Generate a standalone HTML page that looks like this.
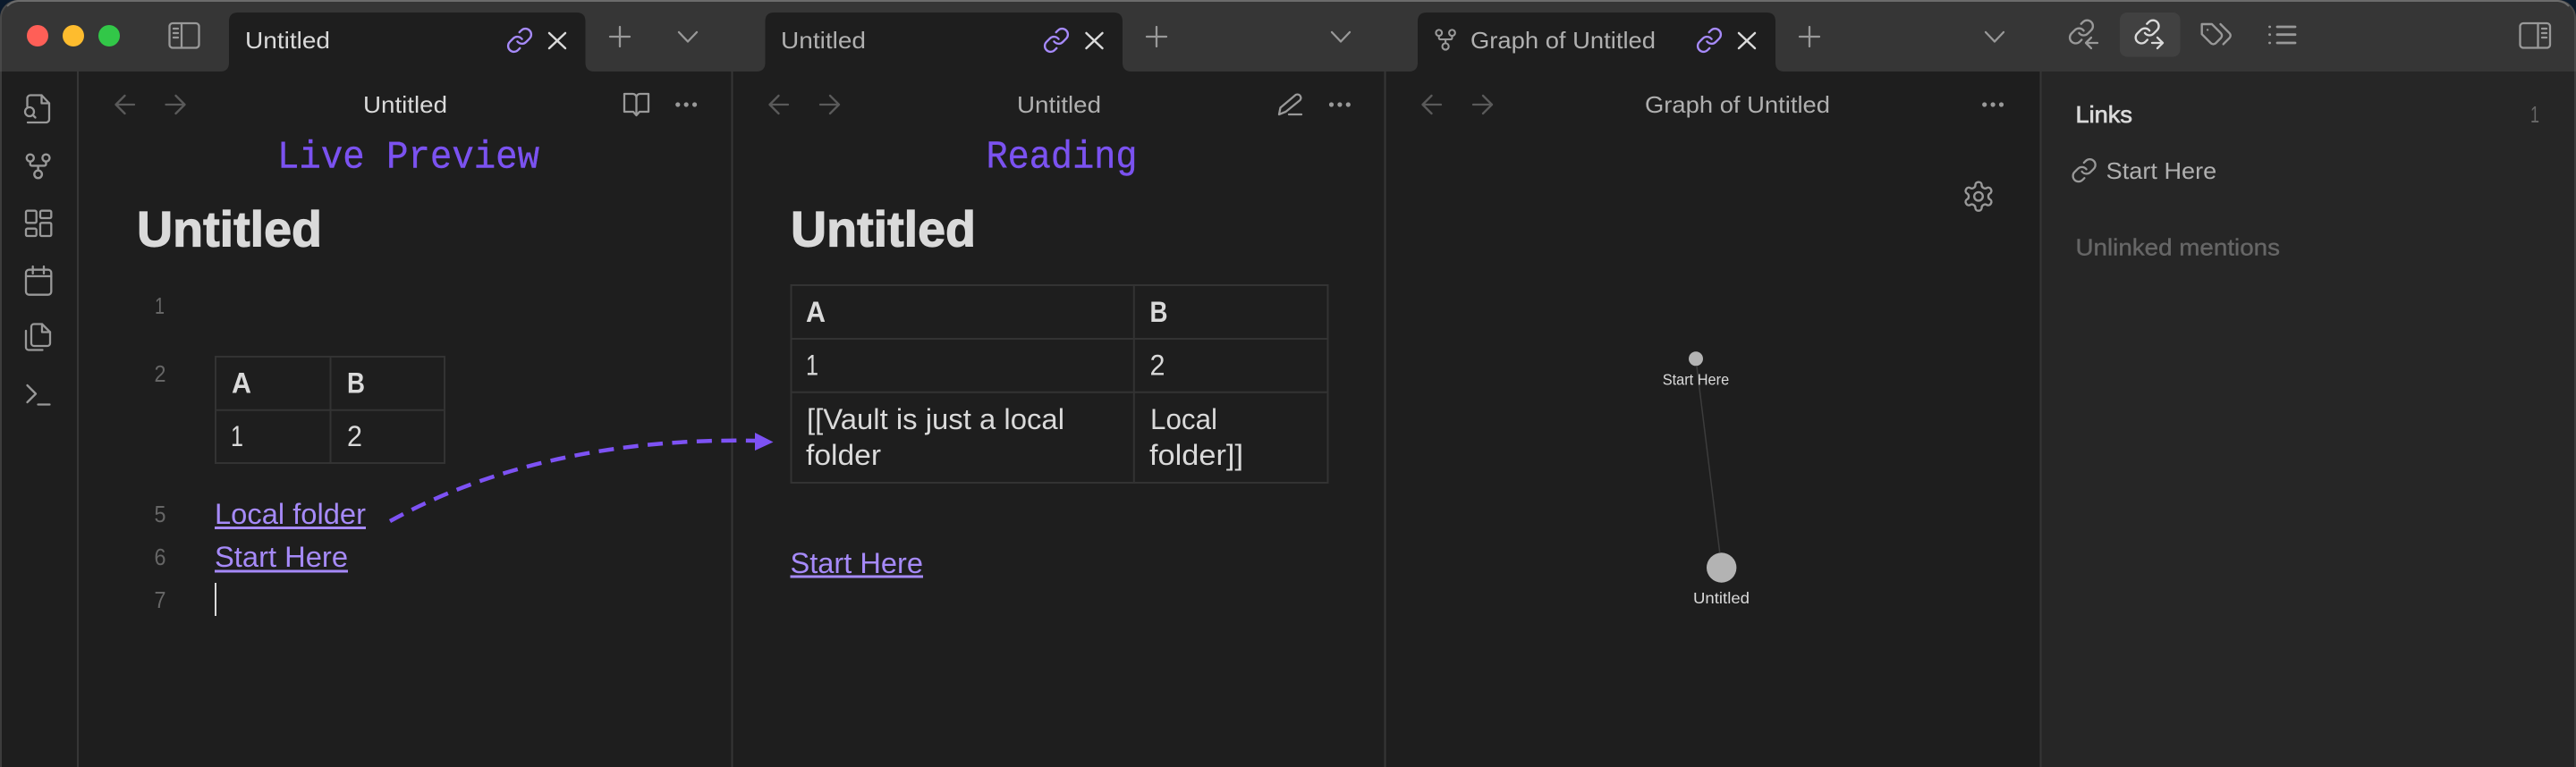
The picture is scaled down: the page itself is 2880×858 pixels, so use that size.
<!DOCTYPE html>
<html lang="en">
<head>
<meta charset="utf-8">
<title>Untitled - Obsidian</title>
<style>
html,body{margin:0;padding:0;width:2880px;height:858px;overflow:hidden;background:#0b1a2c}
svg{display:block;position:absolute;left:0;top:0}
text{font-family:"Liberation Sans",sans-serif;font-size:26px;fill:#dadada}
.mut{fill:#b0b0b0}
.num{fill:#666;font-size:26px}
.h1{font-size:56px;font-weight:700;stroke:#dadada;stroke-width:1.2}
.mono{font-family:"Liberation Mono",monospace;font-size:44px;fill:#7b52f0;stroke:#7b52f0;stroke-width:.4}
.cell{font-size:32px}
.b{font-weight:700}
.lnk{font-size:32px;fill:#a68af9}
.ic{fill:none;stroke:#999;stroke-width:2.300;stroke-linecap:round;stroke-linejoin:round}
.nav{fill:none;stroke:#5a5a5a;stroke-width:2.300;stroke-linecap:round;stroke-linejoin:round}
.cl{fill:none;stroke:#dadada;stroke-width:2.500;stroke-linecap:round}
.gl{font-size:17.500px}
.line{fill:#363636}
.tl{stroke:#a68af9;stroke-width:1.800}
</style>
</head>
<body>
<svg width="2880" height="858" viewBox="0 0 2880 858" xmlns="http://www.w3.org/2000/svg">
<defs>
<g id="link">
<path d="M10 13a5 5 0 0 0 7.540.540l3-3a5 5 0 0 0-7.070-7.070l-1.720 1.710"/>
<path d="M14 11a5 5 0 0 0-7.540-.540l-3 3a5 5 0 0 0 7.070 7.070l1.710-1.710"/>
</g>
<g id="fork">
<circle cx="5" cy="4.500" r="3.200"/>
<circle cx="19" cy="4.500" r="3.200"/>
<circle cx="12" cy="19" r="3.400"/>
<path d="M5 7.700V10a1.500 1.500 0 0 0 1.500 1.500h11A1.500 1.500 0 0 0 19 10V7.700M12 11.500v4"/>
</g>
<g id="dots">
<circle cx="0" cy="0" r="2.600"/><circle cx="9.400" cy="0" r="2.600"/><circle cx="18.800" cy="0" r="2.600"/>
</g>
</defs>

<!-- window -->
<path d="M0 858V20A20 20 0 0 1 20 0H2860A20 20 0 0 1 2880 20V858Z" fill="#1e1e1e"/>
<path d="M0 80V20A20 20 0 0 1 20 0H2860A20 20 0 0 1 2880 20V80Z" fill="#363636"/>
<rect x="2281" y="80" width="599" height="778" fill="#262626"/>
<path d="M1 80V20A19 19 0 0 1 20 1H2860A19 19 0 0 1 2879 20V80" fill="none" stroke="#484848" stroke-width="2"/>
<path d="M8 7A19 19 0 0 1 20 1H2860A19 19 0 0 1 2872 7" fill="none" stroke="#6c6c6c" stroke-width="2"/>
<rect x="0" y="80" width="2" height="778" fill="#3c3c3c"/>
<rect x="2878" y="80" width="2" height="778" fill="#3c3c3c"/>

<!-- tabs -->
<path d="M246 80Q256 80 256 70V24Q256 14 266 14H644.500Q654.500 14 654.500 24V70Q654.500 80 664.500 80Z" fill="#1e1e1e"/>
<path d="M845.500 80Q855.500 80 855.500 70V24Q855.500 14 865.500 14H1245Q1255 14 1255 24V70Q1255 80 1265 80Z" fill="#1e1e1e"/>
<path d="M1575 80Q1585 80 1585 70V24Q1585 14 1595 14H1975Q1985 14 1985 24V70Q1985 80 1995 80Z" fill="#1e1e1e"/>

<!-- pane borders -->
<rect class="line" x="86" y="80" width="2" height="778"/>
<rect class="line" x="817.500" y="80" width="2" height="778"/>
<rect class="line" x="1547.500" y="80" width="2" height="778"/>
<rect class="line" x="2280.500" y="80" width="2" height="778"/>

<!-- traffic lights -->
<circle cx="42" cy="40" r="12" fill="#ff5f57"/>
<circle cx="82" cy="40" r="12" fill="#febc2e"/>
<circle cx="122" cy="40" r="12" fill="#32c748"/>

<!-- left sidebar toggle -->
<g class="ic">
<rect x="189.500" y="26" width="33" height="27.500" rx="3.500"/>
<path d="M203 26V53.500M194 32H199M194 37H199M194 42H199"/>
</g>

<!-- tab 1 -->
<text x="274" y="54" textLength="95" lengthAdjust="spacingAndGlyphs">Untitled</text>
<use href="#link" class="ic tl" transform="translate(565.400 29.400) scale(1.300)" style="stroke:#a68af9;stroke-width:1.800"/>
<path class="cl" d="M614 37L632 54M632 37L614 54"/>
<path class="ic" d="M693 30V52M682 41H704"/>
<path class="ic" d="M759 36L769 46.500L779 36"/>

<!-- tab 2 -->
<text class="mut" x="873" y="54" textLength="95" lengthAdjust="spacingAndGlyphs">Untitled</text>
<use href="#link" class="ic" transform="translate(1165.400 29.400) scale(1.300)" style="stroke:#a68af9;stroke-width:1.800"/>
<path class="cl" d="M1214.500 37L1232.500 54M1232.500 37L1214.500 54"/>
<path class="ic" d="M1293 30V52M1282 41H1304"/>
<path class="ic" d="M1489 36L1499 46.500L1509 36"/>

<!-- tab 3 -->
<use href="#fork" class="ic" transform="translate(1603.500 32) scale(1.050)" style="stroke-width:2"/>
<text class="mut" x="1644" y="54" textLength="207" lengthAdjust="spacingAndGlyphs">Graph of Untitled</text>
<use href="#link" class="ic" transform="translate(1895.400 29.400) scale(1.300)" style="stroke:#a68af9;stroke-width:1.800"/>
<path class="cl" d="M1944 37L1962 54M1962 37L1944 54"/>
<path class="ic" d="M2023 30V52M2012 41H2034"/>
<path class="ic" d="M2220 36L2230 46.500L2240 36"/>

<!-- right toolbar -->
<rect x="2370" y="14" width="67.500" height="49.500" rx="8" fill="#414141"/>
<use href="#link" class="ic" transform="translate(2311.400 20) scale(1.300)" style="stroke-width:1.800"/>
<path class="ic" d="M2345 48H2332M2338 42L2332 48L2338 54"/>
<use href="#link" class="ic" transform="translate(2385 20) scale(1.300)" style="stroke:#dadada;stroke-width:1.800"/>
<path class="ic" style="stroke:#dadada" d="M2406 48H2418M2412 42L2418 48L2412 54"/>
<g transform="translate(2458.500 19) scale(1.600)" fill="none" stroke="#999" stroke-width="1.500" stroke-linecap="round" stroke-linejoin="round">
<path d="M9 5H2v7l6.290 6.290c.940.940 2.480.940 3.420 0l3.580-3.580c.940-.940.940-2.480 0-3.420L9 5Z"/>
<path d="M6 9.010V9"/>
<path d="M15 5l6.300 6.300a2.400 2.400 0 0 1 0 3.400L17 19"/>
</g>
<g class="ic" style="stroke-width:2.800">
<path d="M2546 30H2566M2546 38.700H2566M2546 48H2566"/>
<path d="M2537.500 30H2537.600M2537.500 38.700H2537.600M2537.500 48H2537.600"/>
</g>
<g class="ic">
<rect x="2817.500" y="26" width="33.500" height="27.500" rx="3.500"/>
<path d="M2837.500 26V53.500M2842 32H2847M2842 37H2847M2842 42H2847"/>
</g>

<!-- ribbon -->
<g class="ic">
<path d="M30.500 119V110a3.500 3.500 0 0 1 3.500-3.500H46.500L55 115.500V133.500a3.500 3.500 0 0 1-3.500 3.500H31"/>
<path d="M46.500 106.500V115.500H55"/>
<circle cx="33" cy="125" r="5"/><path d="M37 129L39.500 131.500"/>
<use href="#fork" transform="translate(27.500 171) scale(1.260)" style="stroke-width:1.900"/>
<rect x="29" y="235.700" width="11.700" height="13.600" rx="1.500"/>
<rect x="45" y="235.700" width="12.300" height="8.300" rx="1.500"/>
<rect x="29" y="255.700" width="11.700" height="8.300" rx="1.500"/>
<rect x="45" y="249.300" width="12.300" height="14.700" rx="1.500"/>
<rect x="29" y="301.700" width="28.300" height="28" rx="3.500"/>
<path d="M29 309H57.300M36.700 298V306M49 298V306"/>
<path d="M35 367V384a3 3 0 0 0 3 3H53a3 3 0 0 0 3-3V371.500L47 362.500H38A3 3 0 0 0 35 365.500Z"/>
<path d="M47 362.500V371.500H56"/>
<path d="M29 370V388.500a3 3 0 0 0 3 3H47.500"/>
<path d="M30.500 431L40 440.500L30.500 450M42.500 452.500H55.500"/>
</g>

<!-- pane 1 header -->
<path class="nav" d="M150 117H129.500M139.500 107L129.500 117L139.500 127"/>
<path class="nav" d="M185.500 117H206.500M196.500 107L206.500 117L196.500 127"/>
<text x="406" y="126" textLength="94" lengthAdjust="spacingAndGlyphs">Untitled</text>
<path class="ic" d="M711.500 109a4 4 0 0 0-4-4H698V125H708L711.500 129L715 125H725V105H715.500a4 4 0 0 0-4 4V126"/>
<use href="#dots" transform="translate(757.800 117)" fill="#999"/>

<text class="mono" x="310" y="187.500" textLength="293" lengthAdjust="spacingAndGlyphs">Live Preview</text>
<text class="h1" x="153" y="275.500" textLength="207" lengthAdjust="spacingAndGlyphs">Untitled</text>

<text class="num" x="173" y="351" textLength="11" lengthAdjust="spacingAndGlyphs">1</text>
<text class="num" x="172.500" y="427" textLength="13" lengthAdjust="spacingAndGlyphs">2</text>
<text class="num" x="172.500" y="584" textLength="13" lengthAdjust="spacingAndGlyphs">5</text>
<text class="num" x="172.500" y="632" textLength="13" lengthAdjust="spacingAndGlyphs">6</text>
<text class="num" x="172.500" y="680" textLength="13" lengthAdjust="spacingAndGlyphs">7</text>

<!-- table 1 -->
<g fill="none" stroke="#333" stroke-width="2">
<rect x="241" y="399" width="256" height="119"/>
<path d="M369.500 399V518M241 458.700H497"/>
</g>
<text class="cell b" x="259" y="439.500" textLength="22" lengthAdjust="spacingAndGlyphs">A</text>
<text class="cell b" x="388" y="439.500" textLength="20" lengthAdjust="spacingAndGlyphs">B</text>
<text class="cell" x="258" y="499" textLength="14" lengthAdjust="spacingAndGlyphs">1</text>
<text class="cell" x="388" y="499" textLength="17" lengthAdjust="spacingAndGlyphs">2</text>

<text class="lnk" x="240" y="586" textLength="169" lengthAdjust="spacingAndGlyphs">Local folder</text>
<rect x="240" y="589" width="169" height="3" fill="#a68af9"/>
<text class="lnk" x="240" y="634" textLength="149" lengthAdjust="spacingAndGlyphs">Start Here</text>
<rect x="240" y="637.500" width="149" height="3" fill="#a68af9"/>
<rect x="240" y="652" width="2" height="37" fill="#dadada"/>

<!-- arrow -->
<path d="M436 583C550 520 690 490 845 493" fill="none" stroke="#7d52f4" stroke-width="4.500" stroke-dasharray="17 10.500"/>
<path d="M844 484L864.500 494.500L844 504Z" fill="#7d52f4"/>

<!-- pane 2 header -->
<path class="nav" d="M881 117H860.500M870.500 107L860.500 117L870.500 127"/>
<path class="nav" d="M917 117H938M928 107L938 117L928 127"/>
<text class="mut" x="1137" y="126" textLength="94" lengthAdjust="spacingAndGlyphs">Untitled</text>
<path class="ic" d="M1447.500 107a3.700 3.700 0 0 1 6 5L1437.500 125L1430 128L1431.500 120.500ZM1441 128H1455"/>
<use href="#dots" transform="translate(1488.500 117)" fill="#999"/>

<text class="mono" x="1102.500" y="187.500" textLength="169" lengthAdjust="spacingAndGlyphs">Reading</text>
<text class="h1" x="884" y="275.500" textLength="207" lengthAdjust="spacingAndGlyphs">Untitled</text>

<!-- table 2 -->
<g fill="none" stroke="#333" stroke-width="2">
<rect x="884.500" y="319" width="600" height="221"/>
<path d="M1267.800 319V540M884.500 379H1484.500M884.500 438.700H1484.500"/>
</g>
<text class="cell b" x="901" y="360" textLength="22" lengthAdjust="spacingAndGlyphs">A</text>
<text class="cell b" x="1285.500" y="360" textLength="20" lengthAdjust="spacingAndGlyphs">B</text>
<text class="cell" x="901" y="419.500" textLength="14" lengthAdjust="spacingAndGlyphs">1</text>
<text class="cell" x="1285.500" y="419.500" textLength="17" lengthAdjust="spacingAndGlyphs">2</text>
<text class="cell" x="902" y="480" textLength="288" lengthAdjust="spacingAndGlyphs">[[Vault is just a local</text>
<text class="cell" x="901" y="520" textLength="84" lengthAdjust="spacingAndGlyphs">folder</text>
<text class="cell" x="1286" y="480" textLength="75" lengthAdjust="spacingAndGlyphs">Local</text>
<text class="cell" x="1285" y="520" textLength="105" lengthAdjust="spacingAndGlyphs">folder]]</text>

<text class="lnk" x="883.500" y="641" textLength="148.500" lengthAdjust="spacingAndGlyphs">Start Here</text>
<rect x="883.500" y="643.500" width="148.500" height="3" fill="#a68af9"/>

<!-- pane 3 -->
<path class="nav" d="M1611 117H1590.500M1600.500 107L1590.500 117L1600.500 127"/>
<path class="nav" d="M1647 117H1668M1658 107L1668 117L1658 127"/>
<text class="mut" x="1839" y="126" textLength="207" lengthAdjust="spacingAndGlyphs">Graph of Untitled</text>
<use href="#dots" transform="translate(2218.700 117)" fill="#999"/>
<g transform="translate(2192.800 200.500) scale(1.600)" fill="none" stroke="#999" stroke-width="1.500" stroke-linecap="round" stroke-linejoin="round">
<path d="M12.220 2h-.44a2 2 0 0 0-2 2v.18a2 2 0 0 1-1 1.730l-.43.250a2 2 0 0 1-2 0l-.15-.080a2 2 0 0 0-2.730.730l-.22.380a2 2 0 0 0 .730 2.730l.15.100a2 2 0 0 1 1 1.720v.510a2 2 0 0 1-1 1.740l-.15.090a2 2 0 0 0-.730 2.730l.22.380a2 2 0 0 0 2.730.730l.15-.080a2 2 0 0 1 2 0l.43.250a2 2 0 0 1 1 1.730V20a2 2 0 0 0 2 2h.44a2 2 0 0 0 2-2v-.18a2 2 0 0 1 1-1.730l.43-.25a2 2 0 0 1 2 0l.15.080a2 2 0 0 0 2.730-.730l.22-.39a2 2 0 0 0-.730-2.730l-.15-.080a2 2 0 0 1-1-1.740v-.5a2 2 0 0 1 1-1.740l.15-.090a2 2 0 0 0 .730-2.730l-.22-.38a2 2 0 0 0-2.730-.730l-.15.080a2 2 0 0 1-2 0l-.43-.25a2 2 0 0 1-1-1.730V4a2 2 0 0 0-2-2z"/>
<circle cx="12" cy="12" r="3"/>
</g>

<!-- graph -->
<path d="M1897 410L1922.700 618" stroke="#3c3c3c" stroke-width="1.500" fill="none"/>
<circle cx="1896" cy="401.300" r="8" fill="#b3b3b3"/>
<circle cx="1924.700" cy="635" r="16.700" fill="#b3b3b3"/>
<text class="gl" x="1858.700" y="430.700" textLength="74.500" lengthAdjust="spacingAndGlyphs">Start Here</text>
<text class="gl" x="1893" y="675" textLength="63" lengthAdjust="spacingAndGlyphs">Untitled</text>

<!-- right sidebar -->
<text x="2320.500" y="137" textLength="63.500" lengthAdjust="spacingAndGlyphs" style="stroke:#dadada;stroke-width:.7">Links</text>
<text x="2829" y="137" textLength="10" lengthAdjust="spacingAndGlyphs" style="fill:#666">1</text>
<use href="#link" class="ic" transform="translate(2315 175.500) scale(1.260)" style="stroke-width:1.800"/>
<text class="mut" x="2354.700" y="200" textLength="123.500" lengthAdjust="spacingAndGlyphs">Start Here</text>
<text x="2320.500" y="285.500" textLength="228.500" lengthAdjust="spacingAndGlyphs" style="fill:#666;stroke:#666;stroke-width:.4">Unlinked mentions</text>
</svg>
</body>
</html>
